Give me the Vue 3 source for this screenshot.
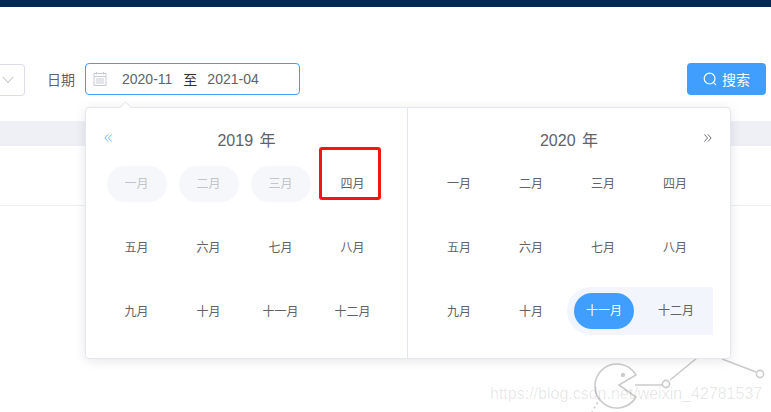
<script setup>
const months = ['一月', '二月', '三月', '四月', '五月', '六月', '七月', '八月', '九月', '十月', '十一月', '十二月']

const leftCells = months.map((name, i) => ({ name, disabled: i < 3 }))
const rightCells = months.map((name, i) => ({
  name,
  start: i === 10,
  inRange: i === 11
}))
</script>

<template>
  <div class="page">
    <div class="top-bar"></div>

    <div class="toolbar">
      <div class="select">
        <svg class="select-arrow" viewBox="0 0 12 8" width="12" height="8">
          <path d="M1 1l5 5.5L11 1" fill="none" stroke="#c0c4cc" stroke-width="1.1" />
        </svg>
      </div>
      <label class="date-label">日期</label>
      <div class="date-input">
        <svg class="date-icon" viewBox="0 0 14 14" width="14" height="14">
          <path d="M1 1.5h12v12h-12zM1 4.5h12M3.5 0v2.5M10.5 0v2.5M3 7h8M3 9h8M3 11h8" fill="none" stroke="#c6cad3" stroke-width="1" />
        </svg>
        <span class="date-value">2020-11</span>
        <span class="date-sep">至</span>
        <span class="date-value">2021-04</span>
      </div>
      <button class="search-btn">
        <svg viewBox="0 0 14 14" width="14" height="14">
          <circle cx="6.6" cy="6.6" r="5.4" fill="none" stroke="#fff" stroke-width="1.2" />
          <path d="M10.6 10.6L13 13" stroke="#fff" stroke-width="1.2" />
        </svg>
        <span>搜索</span>
      </button>
    </div>

    <div class="table-head"></div>
    <div class="table-row"></div>

    <!-- watermark sits under the popper -->
    <svg class="mark-art" viewBox="0 0 180 72" width="180" height="72">
      <g fill="none" stroke="#cbcbcb" stroke-width="1.6">
        <path d="M39 16A22 22 0 1 0 39 38L22 26Z" />
        <path d="M38 26H65M73 21L100 -1M125 0L159 13" />
        <circle cx="69" cy="25" r="3.6" />
        <circle cx="163" cy="15" r="3.6" />
        <path d="M3 39L-5 53" stroke-dasharray="2 3" />
      </g>
      <circle cx="26" cy="16" r="2.2" fill="#cbcbcb" />
    </svg>
    <span class="mark-text">https://blog.csdn.net/weixin_42781537</span>

    <div class="picker">
      <div class="picker-arrow"></div>
      <section class="panel panel-left">
        <header class="panel-head">
          <svg class="nav nav-prev" viewBox="0 0 10 10" width="9" height="10">
            <path d="M4.5 1L1 5l3.5 4M8.5 1L5 5l3.5 4" fill="none" stroke="#66b1ff" stroke-width="1" />
          </svg>
          <span>2019 年</span>
        </header>
        <div class="grid">
          <div v-for="cell in leftCells" :key="cell.name" class="cell">
            <span class="pill" :class="{ disabled: cell.disabled }">{{ cell.name }}</span>
          </div>
        </div>
      </section>
      <section class="panel">
        <header class="panel-head">
          <span>2020 年</span>
          <svg class="nav nav-next" viewBox="0 0 10 10" width="9" height="10">
            <path d="M1.5 1L5 5L1.5 9M5.5 1L9 5l-3.5 4" fill="none" stroke="#606266" stroke-width="1" />
          </svg>
        </header>
        <div class="grid">
          <div
            v-for="cell in rightCells"
            :key="cell.name"
            class="cell"
            :class="{ 'range-start': cell.start, 'range-mid': cell.inRange }"
          >
            <span class="pill" :class="{ active: cell.start }">{{ cell.name }}</span>
          </div>
        </div>
      </section>
      <div class="red-box"></div>
    </div>
  </div>
</template>

<style>
html,
body {
  margin: 0;
  background: #fff;
}
</style>

<style scoped>
.page {
  position: relative;
  width: 771px;
  height: 412px;
  overflow: hidden;
  background: #fff;
  font-family: "Liberation Sans", "Noto Sans CJK SC", sans-serif;
  font-size: 14px;
  color: #606266;
}

.top-bar {
  height: 7px;
  background: #002a52;
}

.toolbar {
  display: flex;
  align-items: center;
  height: 32px;
  margin-top: 56px;
}

.select {
  display: flex;
  align-items: center;
  justify-content: center;
  box-sizing: border-box;
  width: 25px;
  height: 32px;
  margin-top: 2px;
  padding-right: 9px;
  border: 1px solid #dcdfe6;
  border-left: none;
  border-radius: 0 4px 4px 0;
}

.date-label {
  margin-left: 22px;
  margin-right: 10px;
}

.date-input {
  display: flex;
  align-items: center;
  box-sizing: border-box;
  width: 215px;
  height: 32px;
  padding-left: 7px;
  border: 1px solid #409eff;
  border-radius: 4px;
}

.date-icon {
  margin-right: 15px;
}

.date-sep {
  margin: 0 10px 0 11px;
  color: #303133;
}

.search-btn {
  display: flex;
  align-items: center;
  justify-content: center;
  gap: 5px;
  width: 79px;
  height: 32px;
  margin-left: auto;
  margin-right: 5px;
  padding: 0;
  border: none;
  border-radius: 4px;
  background: #409eff;
  color: #fff;
  font: inherit;
}

.table-head {
  height: 25px;
  margin-top: 26px;
  background: #eff0f5;
}

.table-row {
  height: 59px;
  border-bottom: 1px solid #ebeef5;
}

.mark-art {
  position: absolute;
  left: 597px;
  top: 359px;
  overflow: visible;
}

.mark-text {
  position: absolute;
  left: 490px;
  top: 384px;
  font-size: 16px;
  line-height: 20px;
  color: rgba(0, 0, 0, 0.1);
  white-space: nowrap;
}

.picker {
  position: absolute;
  left: 85px;
  top: 107px;
  display: flex;
  box-sizing: border-box;
  width: 646px;
  height: 252px;
  background: #fff;
  border: 1px solid #e4e7ed;
  border-radius: 4px;
  box-shadow: 0 2px 12px rgba(0, 0, 0, 0.1);
}

.picker-arrow {
  position: absolute;
  left: 35px;
  top: -5px;
  width: 8px;
  height: 8px;
  background: #fff;
  border-top: 1px solid #e4e7ed;
  border-left: 1px solid #e4e7ed;
  transform: rotate(45deg);
}

.panel {
  flex: 1;
  display: flex;
  flex-direction: column;
  align-items: center;
}

.panel-left {
  flex: none;
  box-sizing: border-box;
  width: 322px;
  border-right: 1px solid #e4e7ed;
}

.panel-head {
  position: relative;
  align-self: stretch;
  height: 23px;
  margin-top: 21px;
  font-size: 16px;
  line-height: 24px;
  word-spacing: 2px;
  text-align: center;
}

.nav {
  position: absolute;
  top: 4px;
}

.nav-prev {
  left: 18px;
}

.nav-next {
  right: 18px;
}

.grid {
  display: grid;
  grid-template-columns: repeat(4, 72px);
  grid-auto-rows: 64px;
  margin-right: 4px;
  font-size: 12px;
}

.cell {
  display: flex;
  align-items: center;
  justify-content: center;
}

.pill {
  display: block;
  flex: none;
  width: 60px;
  height: 36px;
  line-height: 36px;
  border-radius: 18px;
  text-align: center;
}

.pill.disabled {
  background: #f5f7fa;
  color: #c0c4cc;
}

.pill.active {
  background: #409eff;
  color: #fff;
}

.range-start,
.range-mid {
  height: 48px;
  align-self: center;
  margin-bottom: 2px;
  background: #f2f6fc;
}

.range-start {
  padding-left: 2px;
  border-radius: 24px 0 0 24px;
}

.range-mid {
  margin-right: -2px;
}

.red-box {
  position: absolute;
  left: 233px;
  top: 39px;
  box-sizing: border-box;
  width: 62px;
  height: 53px;
  border: 3px solid #f5170e;
  border-radius: 3px;
}
</style>
